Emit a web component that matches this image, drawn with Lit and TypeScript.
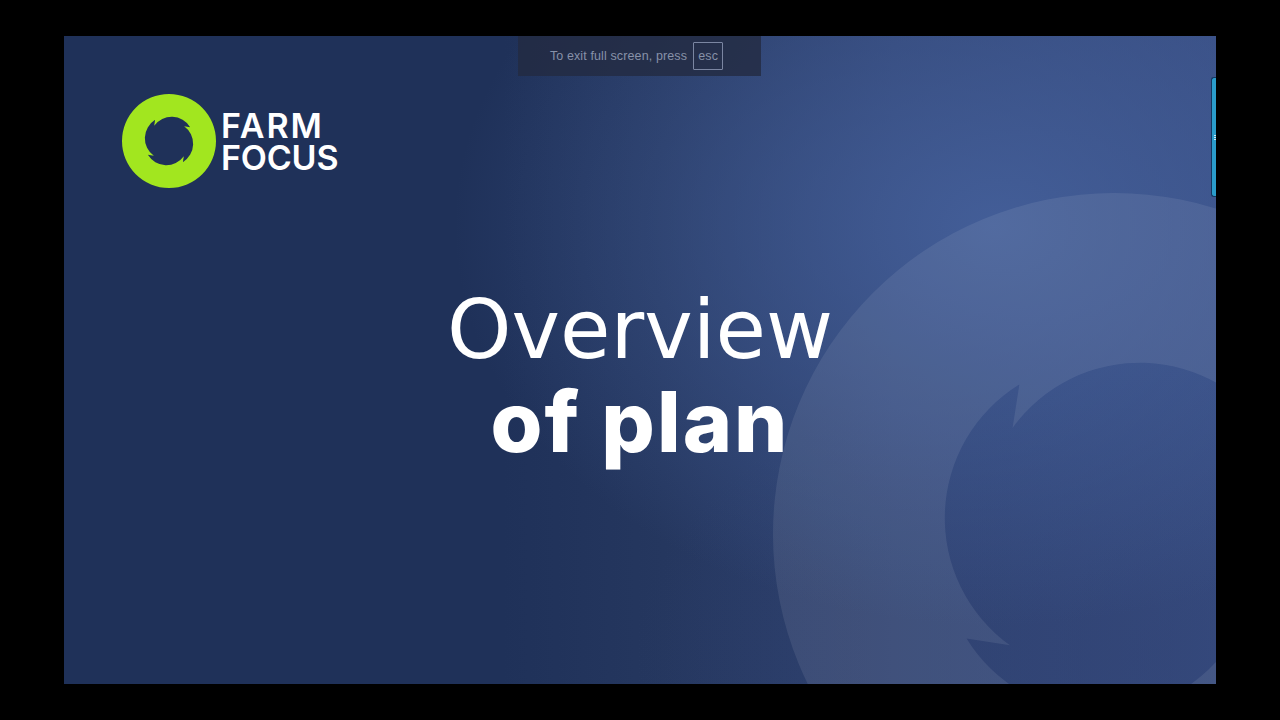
import { LitElement, html, css, svg } from "lit";
import { customElement } from "lit/decorators.js";

// Ring with a four-armed swirl hole, in a box of -2..2 (outer radius 2, hole radius about 1).
const tips: [number, number][] = [[-0.59, -0.9], [0.9, -0.59], [0.59, 0.9], [-0.9, 0.59]];
const notches: [number, number][] = [[-0.63, -0.645], [0.645, -0.63], [0.63, 0.645], [-0.645, 0.63]];

const ringPath = (dx: number, dy: number) => {
  const p = (c: [number, number]) => `${(c[0] + dx).toFixed(3)} ${(c[1] + dy).toFixed(3)}`;
  let d = `M-2 0A2 2 0 1 1 2 0A2 2 0 1 1 -2 0ZM${p(tips[0])}`;
  for (let i = 0; i < 4; i++) {
    d += `L${p(notches[i])}A0.92 0.92 0 0 1 ${p(tips[(i + 1) % 4])}`;
  }
  return d + "Z";
};

const ring = (cls: string, dx = 0, dy = 0) => html`<svg class=${cls} viewBox="-2 -2 4 4" aria-hidden="true">
  ${svg`<path d=${ringPath(dx, dy)} fill="currentColor" fill-rule="evenodd"></path>`}
</svg>`;

@customElement("app-root")
export class AppRoot extends LitElement {
  static styles = css`
    :host {
      display: flex;
      align-items: center;
      justify-content: center;
      width: 1280px;
      height: 720px;
      background: #000;
      overflow: hidden;
    }
    .slide {
      position: relative;
      width: 1152px;
      height: 648px;
      overflow: hidden;
      display: flex;
      flex-direction: column;
      background:
        radial-gradient(ellipse 540px 400px at 930px 190px, rgba(70, 98, 158, 0.85), rgba(70, 98, 158, 0) 100%),
        radial-gradient(ellipse 480px 300px at 1050px 620px, rgba(48, 66, 115, 0.5), rgba(48, 66, 115, 0) 100%),
        linear-gradient(90deg, #1f3159 0%, #1f3159 38%, #25375f 52%, #2f4270 72%, #374c80 100%);
    }
    .mark {
      position: absolute;
      left: 709px;
      top: 157px;
      width: 682px;
      height: 682px;
      color: #fff;
      opacity: 0.08;
    }
    .brand {
      position: relative;
      display: flex;
      align-items: center;
      gap: 5px;
      padding: 58px 0 0 58px;
      color: #fff;
      font-family: "Inter", "Liberation Sans", sans-serif;
    }
    .logo {
      width: 94px;
      height: 94px;
      color: #a2e61f;
      flex: none;
    }
    .word {
      padding-top: 2px;
      font-size: 34px;
      font-weight: 600;
      line-height: 32px;
      letter-spacing: -0.2px;
    }
    .word span {
      display: block;
    }
    .word .wide {
      letter-spacing: 1.9px;
    }
    .title {
      position: relative;
      margin: 94px 0 0;
      text-align: center;
      color: #fff;
      font-weight: 400;
    }
    .title span {
      display: block;
    }
    .title .light {
      font-family: "DejaVu Sans", "Inter", sans-serif;
      font-size: 82px;
      line-height: 96px;
    }
    .title .strong {
      margin-top: -4px;
      font-family: "Inter", "Liberation Sans", sans-serif;
      font-size: 84px;
      line-height: 96px;
      font-weight: 800;
      letter-spacing: 2px;
    }
    .toast {
      position: absolute;
      top: 0;
      left: 454px;
      width: 243px;
      height: 40px;
      box-sizing: border-box;
      padding-right: 6px;
      display: flex;
      align-items: center;
      justify-content: center;
      gap: 6px;
      background: rgba(35, 42, 65, 0.8);
      color: #8791a8;
      font-family: "Liberation Sans", sans-serif;
      font-size: 12.5px;
      letter-spacing: 0.12px;
    }
    .key {
      display: flex;
      align-items: center;
      justify-content: center;
      width: 30px;
      height: 28px;
      box-sizing: border-box;
      border: 1px solid #7b86a2;
      border-radius: 1px;
    }
    .handle {
      position: absolute;
      right: 0;
      top: 41px;
      width: 5px;
      height: 120px;
      box-sizing: border-box;
      display: flex;
      flex-direction: column;
      align-items: flex-end;
      justify-content: center;
      gap: 1px;
      background: #2a9ccb;
      border: 1px solid #14365f;
      border-right: 0;
      border-radius: 3px 0 0 3px;
    }
    .handle i {
      width: 2px;
      height: 1px;
      background: #cfe9f5;
    }
  `;

  render() {
    return html`<section class="slide">
      ${ring("mark", 0.035, 0.023)}
      <header class="brand">
        ${ring("logo")}
        <div class="word"><span class="wide">FARM</span><span>FOCUS</span></div>
      </header>
      <h1 class="title"><span class="light">Overview</span><span class="strong">of plan</span></h1>
      <div class="toast">To exit full screen, press <span class="key">esc</span></div>
      <div class="handle"><i></i><i></i><i></i></div>
    </section>`;
  }
}
